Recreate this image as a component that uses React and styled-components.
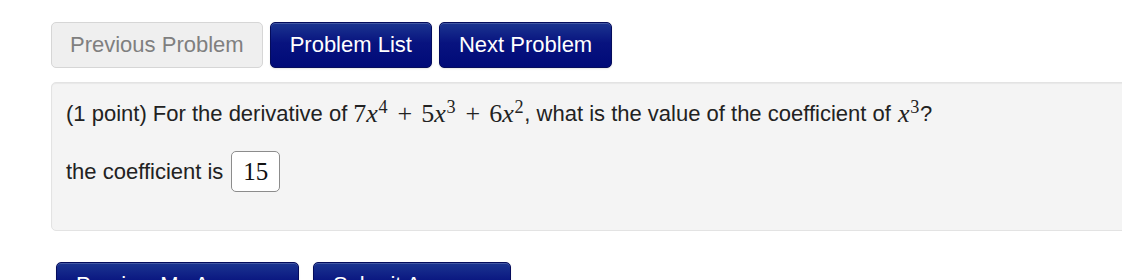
import styled, { createGlobalStyle } from "styled-components";

const GlobalStyle = createGlobalStyle`
    html, body {
        margin: 0;
        padding: 0;
        background: #ffffff;
        overflow: hidden;
    }
    body {
        font-family: "Liberation Sans", Arial, Helvetica, sans-serif;
        color: #222;
    }
`

const Page = styled.div`
    width: 1122px;
    height: 280px;
    overflow: hidden;
    padding: 22px 0 0 51px;
    box-sizing: border-box;
`

const Toolbar = styled.div`
    display: flex;
    gap: 7px;
    padding-left: ${props => props.$indent || 0}px;
`

const Button = styled.button`
    box-sizing: border-box;
    height: 46px;
    padding: 0 ${props => props.$pad || 18}px;
    font-family: "Liberation Sans", Arial, sans-serif;
    font-size: 22px;
    line-height: 30px;
    border-radius: 5px;
    cursor: pointer;
    color: ${props => props.$disabled ? "#7f7f7f" : "#ffffff"};
    background: ${props => props.$disabled
        ? "#efefef"
        : "linear-gradient(to bottom, #1b3590 0%, #08137f 45%, #000a78 100%)"};
    border: 1.5px solid ${props => props.$disabled ? "#d6d6d6" : "#050c5c"};
    box-shadow: ${props => props.$disabled
        ? "none"
        : "inset 0 1px 0 rgba(255,255,255,0.18), 0 1px 2px rgba(0,0,0,0.1)"};
`

const Well = styled.div`
    box-sizing: border-box;
    width: 1100px;
    height: 149px;
    margin-top: 14px;
    padding: 16px 14px 0 14px;
    background: #f4f4f4;
    border: 1.5px solid #e3e3e3;
    border-radius: 5px;
    box-shadow: inset 0 1px 1px rgba(0,0,0,0.05);
    display: flex;
    flex-direction: column;
    gap: 22px;
`

const Line = styled.div`
    display: flex;
    align-items: center;
    font-size: 22px;
    line-height: 30px;
    white-space: pre;
`

const Math = styled.span`
    font-family: "Liberation Serif", "Times New Roman", serif;
    font-size: 26px;
    margin: 0 ${props => props.$right || 0}px 0 ${props => props.$left || 0}px;
`

const Var = styled.i`
    font-style: italic;
    margin-right: 0.03em;
`

const Sup = styled.sup`
    font-size: 0.7em;
    vertical-align: 0.5em;
    line-height: 0;
    margin-right: 0.04em;
`

const Op = styled.span`
    margin: 0 0.35em;
`

const AnswerBox = styled.div`
    box-sizing: border-box;
    width: 49px;
    height: 41px;
    margin-left: 8px;
    display: flex;
    align-items: center;
    justify-content: center;
    background: #ffffff;
    border: 1.5px solid #8c8c8c;
    border-radius: 5px;
    font-family: "Liberation Serif", "Times New Roman", serif;
    font-size: 25px;
    color: #111;
`

const SubmitRow = styled(Toolbar)`
    margin-top: 31px;
    gap: 14px;
`

const Poly = () => (
    <Math $left={6}>
        7<Var>x</Var><Sup>4</Sup>
        <Op>+</Op>
        5<Var>x</Var><Sup>3</Sup>
        <Op>+</Op>
        6<Var>x</Var><Sup>2</Sup>
    </Math>
)

const App = () => {
    return (
        <Page>
            <GlobalStyle />
            <Toolbar>
                <Button $disabled>Previous Problem</Button>
                <Button $pad={19}>Problem List</Button>
                <Button $pad={19}>Next Problem</Button>
            </Toolbar>
            <Well>
                <Line>
                    (1 point) For the derivative of<Poly />, what is the value of the coefficient of <Math $left={1}><Var>x</Var><Sup>3</Sup></Math>?
                </Line>
                <Line>
                    the coefficient is
                    <AnswerBox>15</AnswerBox>
                </Line>
            </Well>
            <SubmitRow $indent={5}>
                <Button $pad={19}>Preview My Answers</Button>
                <Button $pad={19}>Submit Answers</Button>
            </SubmitRow>
        </Page>
    )
}

export default App
